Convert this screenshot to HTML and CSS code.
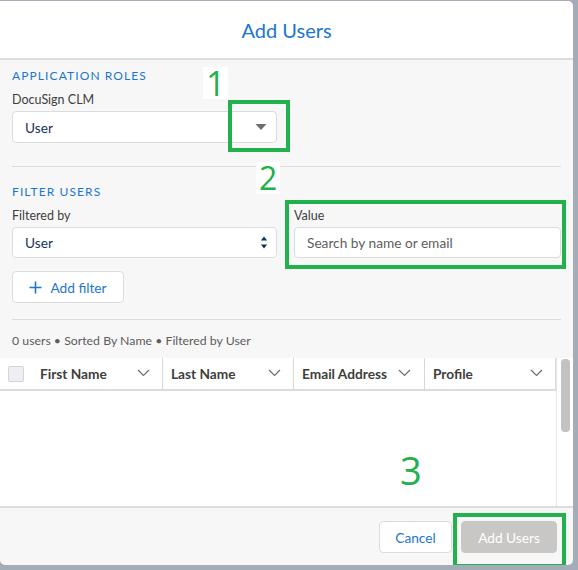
FILE: index.html
```html
<!DOCTYPE html>
<html lang="en">
<head>
    <meta charset="UTF-8">
    <title>Add Users</title>
    <link rel="stylesheet" href="styles.css">
</head>
<body>
    <div class="modal">
        <div class="head">
            <h2>Add Users</h2>
        </div>
        <div class="content">
            <h4 class="section">APPLICATION ROLES</h4>
            <div class="label">DocuSign CLM</div>
            <div class="select roles">
                <span>User</span>
                <svg class="tri" width="12" height="8" viewBox="0 0 12 8"><path d="M0.5 1h11L6 7z" fill="#6b6d70"/></svg>
            </div>
            <div class="divider"></div>
            <h4 class="section">FILTER USERS</h4>
            <div class="filters">
                <div class="field">
                    <div class="label">Filtered by</div>
                    <div class="select">
                        <span>User</span>
                        <svg class="updown" width="8" height="15" viewBox="0 0 8 15"><path d="M4 1.5l3.2 4h-6.4zM4 13.5l3.2-4h-6.4z" fill="#16325c"/></svg>
                    </div>
                </div>
                <div class="field">
                    <div class="label">Value</div>
                    <div class="input">Search by name or email</div>
                </div>
            </div>
            <button class="btn add">
                <svg width="13" height="13" viewBox="0 0 13 13"><path d="M6.5 0.5v12M0.5 6.5h12" stroke="#1b76d3" stroke-width="1.6"/></svg>
                Add filter
            </button>
            <div class="divider last"></div>
            <div class="meta">0 users &bull; Sorted By Name &bull; Filtered by User</div>
        </div>
        <div class="table">
            <div class="grid">
                <div class="thead">
                    <div class="check"><span class="box"></span></div>
                    <div class="th">First Name <svg class="chev" width="13" height="8" viewBox="0 0 13 8"><path d="M1 1l5.5 5.5L12 1" fill="none" stroke="#6b6d70" stroke-width="1.2"/></svg></div>
                    <div class="th">Last Name <svg class="chev" width="13" height="8" viewBox="0 0 13 8"><path d="M1 1l5.5 5.5L12 1" fill="none" stroke="#6b6d70" stroke-width="1.2"/></svg></div>
                    <div class="th">Email Address <svg class="chev" width="13" height="8" viewBox="0 0 13 8"><path d="M1 1l5.5 5.5L12 1" fill="none" stroke="#6b6d70" stroke-width="1.2"/></svg></div>
                    <div class="th">Profile <svg class="chev" width="13" height="8" viewBox="0 0 13 8"><path d="M1 1l5.5 5.5L12 1" fill="none" stroke="#6b6d70" stroke-width="1.2"/></svg></div>
                </div>
                <div class="tbody"></div>
            </div>
            <div class="scroll"><div class="thumb"></div></div>
        </div>
        <div class="foot">
            <button class="btn cancel">Cancel</button>
            <button class="btn primary">Add Users</button>
        </div>

        <div class="mark n1">1</div>
        <div class="mark n2">2</div>
        <div class="mark n3">3</div>
        <div class="hl h1"></div>
        <div class="hl h2"></div>
        <div class="hl h3"></div>
    </div>
</body>
</html>
```

FILE: styles.css
```css
body{
    margin: 0;
    padding-top: 1px;
    height: 569px;
    background: #a3acb7;
    font-family: "Lato", "Open Sans", sans-serif;
    overflow: hidden;
}
.modal{
    position: relative;
    width: 573px;
    background: #f7f7f7;
    border-radius: 0 5px 5px 5px;
    overflow: hidden;
}
.head{
    height: 57px;
    background: white;
    border-bottom: 2px solid #dcdcdc;
    border-radius: 0 5px 0 0;
    display: flex;
    justify-content: center;
    align-items: center;
}
.head h2{
    margin: 0;
    font-weight: 400;
    font-size: 20px;
    color: #1b76d3;
}
.content{
    padding: 8px 12px 0 12px;
    height: 290px;
}
.section{
    margin: 0;
    font-size: 12px;
    font-weight: 400;
    letter-spacing: 1.1px;
    color: #1b76d3;
    line-height: 16px;
}
.label{
    font-size: 12.5px;
    color: #3e3e3c;
    line-height: 16px;
    margin-top: 8px;
    margin-bottom: 3px;
}
.select, .input{
    box-sizing: border-box;
    height: 31px;
    background: white;
    border: 1px solid #dcdcdc;
    border-radius: 4px;
    display: flex;
    align-items: center;
    justify-content: space-between;
    padding: 0 8px 0 12px;
    font-size: 13.7px;
    color: #16325c;
}
.roles{
    width: 265px;
    height: 32px;
    padding-right: 9px;
}
.divider{
    height: 1px;
    background: #dcdcdc;
    margin: 23px 0 17px;
}
.divider.last{
    margin: 16px 0 13px;
}
.filters{
    display: flex;
    gap: 17px;
}
.field{
    flex: 1;
}
.field:first-child{
    flex: 0 0 265px;
}
.input{
    color: #5e5e5e;
}
.btn{
    box-sizing: border-box;
    font-family: inherit;
    font-size: 13.7px;
    border: 1px solid #dcdcdc;
    border-radius: 4px;
    background: white;
    color: #1b76d3;
    height: 32px;
    display: flex;
    align-items: center;
    justify-content: center;
    gap: 8px;
}
.add{
    width: 112px;
    margin-top: 13px;
    padding: 0;
}
.meta{
    font-size: 12.3px;
    color: #5c5c5c;
    line-height: 16px;
}
.table{
    display: flex;
    height: 148px;
    background: white;
}
.grid{
    flex: 1;
}
.thead{
    height: 31px;
    border-bottom: 2px solid #dcdcdc;
    display: flex;
    align-items: stretch;
}
.check{
    width: 32px;
    display: flex;
    align-items: center;
    padding-left: 8px;
    box-sizing: border-box;
}
.box{
    width: 14px;
    height: 14px;
    border: 1px solid #d4d4d4;
    border-radius: 2px;
    background: #eeeff2;
}
.th{
    width: 131px;
    box-sizing: border-box;
    padding: 0 12px 0 8px;
    display: flex;
    align-items: center;
    justify-content: space-between;
    font-size: 13.7px;
    font-weight: 700;
    color: #3e3e3c;
    border-right: 1px solid #d8d8d8;
}
.th:nth-child(4){
    padding-right: 13px;
}
.chev{
    margin-top: -1px;
}
.scroll{
    width: 17px;
    border-left: 1px solid #e6e6e6;
    padding: 1px 3px 0 4px;
    box-sizing: border-box;
}
.thumb{
    height: 73px;
    background: #c2c2c2;
    border-radius: 4px;
}
.foot{
    height: 57px;
    border-top: 2px solid #dcdcdc;
    display: flex;
    justify-content: flex-end;
    align-items: center;
    gap: 9px;
    padding-right: 16px;
}
.cancel{
    width: 73px;
    margin-top: 1px;
}
.primary{
    width: 96px;
    margin-top: 1px;
    background: #c9c7c5;
    border-color: #c9c7c5;
    color: white;
}
.mark{
    position: absolute;
    color: #22b14c;
    font-family: "Open Sans", sans-serif;
    font-size: 32px;
    line-height: 32px;
    background: white;
    padding: 0 3px;
}
.n1{ left: 203px; top: 66px; font-size: 34px; }
.n2{ left: 256px; top: 161px; }
.n3{ left: 397px; top: 453px; font-size: 38px; background: none; }
.hl{
    position: absolute;
    border: 4px solid #22b14c;
    box-sizing: border-box;
}
.h1{ left: 228px; top: 99px; width: 62px; height: 52px; }
.h2{ left: 285px; top: 199px; width: 281px; height: 69px; }
.h3{ left: 453px; top: 512px; width: 113px; height: 55px; }
```
